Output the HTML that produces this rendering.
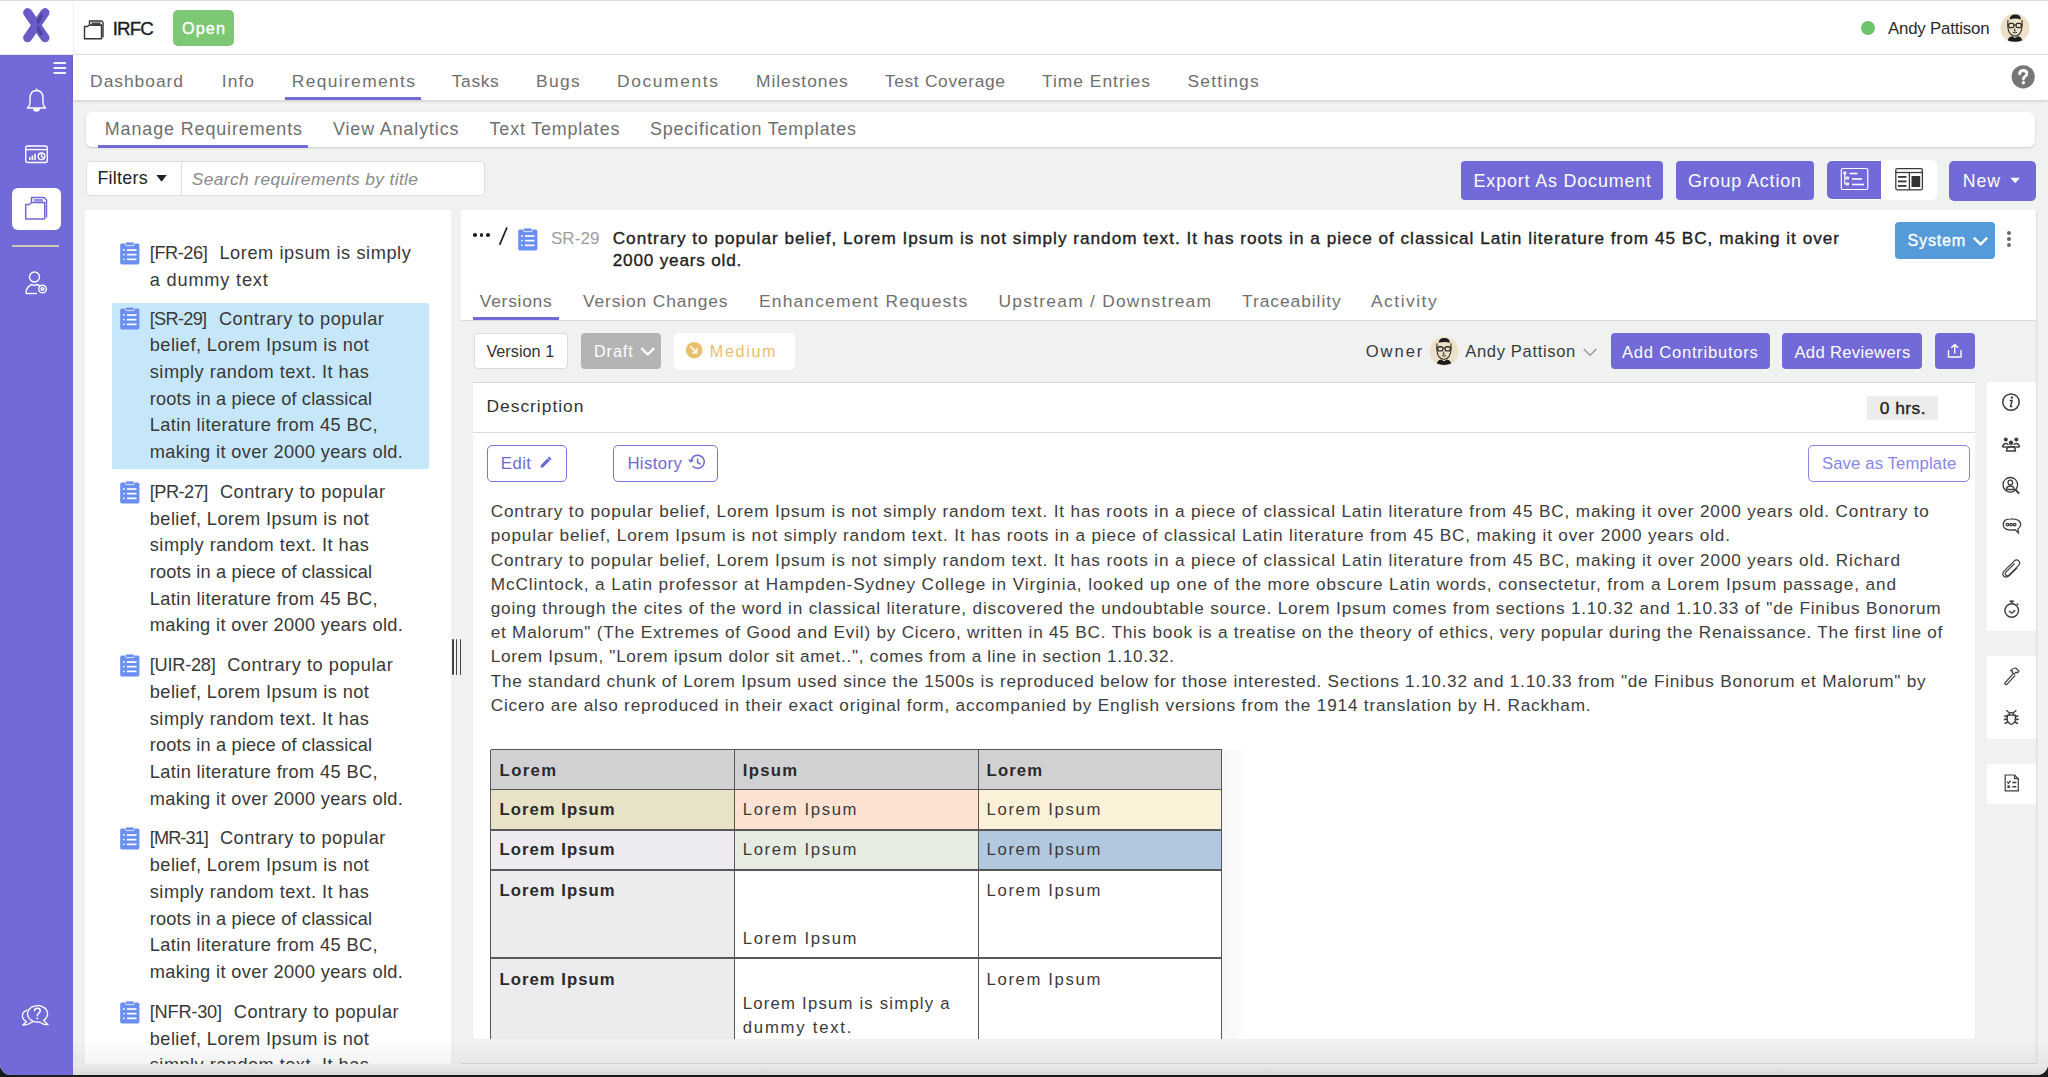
<!DOCTYPE html>
<html><head><meta charset="utf-8"><style>
html,body{margin:0;padding:0;}
body{width:2048px;height:1077px;overflow:hidden;background:#1b1b1b;font-family:"Liberation Sans",sans-serif;position:relative;}
#scr{position:absolute;left:0;top:0;width:2048px;height:1075px;background:#f0f1f1;overflow:hidden;border-radius:0 0 11px 11px;}
#scr div,#scr svg,#scr span{position:absolute;}
.t{white-space:pre;line-height:0;height:0;display:block;}
.t .b{display:inline-block;width:0;height:0;vertical-align:baseline;}
</style></head><body><div id="scr">
<div style="left:0px;top:0px;width:2048px;height:54px;background:#fff"></div>
<div style="left:0px;top:0px;width:2048px;height:1px;background:#dcdcdc"></div>
<div style="left:0px;top:54px;width:2048px;height:1px;background:#e2e2e2"></div>
<div style="left:73px;top:1px;width:1px;height:53px;background:#efefef"></div>
<div style="left:0px;top:55px;width:73px;height:1020px;background:#716ad8"></div>
<div style="left:73px;top:55px;width:1975px;height:45px;background:#fff;box-shadow:0 1px 3px rgba(0,0,0,.18)"></div>
<div style="left:285px;top:97px;width:136px;height:3px;background:#716ad8"></div>
<div style="left:86px;top:112px;width:1949px;height:35px;background:#fff;border-radius:6px;box-shadow:0 1px 2px rgba(0,0,0,.16)"></div>
<div style="left:98px;top:145px;width:210px;height:2.5px;background:#716ad8"></div>
<div style="left:86px;top:160.5px;width:399px;height:35.0px;background:#fff;border:1px solid #dedede;border-radius:4px;box-sizing:border-box"></div>
<div style="left:180.5px;top:161px;width:1.0px;height:34px;background:#dedede"></div>
<div style="left:1460.5px;top:160.5px;width:202.5px;height:39.5px;background:#716ad8;border-radius:4px"></div>
<div style="left:1675.5px;top:160.5px;width:138.5px;height:39.5px;background:#716ad8;border-radius:4px"></div>
<div style="left:1827px;top:160px;width:110px;height:40px;background:#fff;border-radius:5px"></div>
<div style="left:1827px;top:161px;width:54px;height:38px;background:#716ad8;border-radius:5px 0 0 5px"></div>
<div style="left:1949px;top:160.5px;width:87px;height:40.0px;background:#716ad8;border-radius:5px"></div>
<div style="left:85px;top:210px;width:366px;height:853.5px;background:#fff"></div>
<div style="left:112px;top:303px;width:317px;height:165.5px;background:#c6e7fa;border-radius:2px"></div>
<div style="left:461px;top:210px;width:1575px;height:853.5px;background:#f0f1f1;box-shadow:1px 1px 1px rgba(0,0,0,.08)"></div>
<div style="left:461px;top:210px;width:1575px;height:110px;background:#fff"></div>
<div style="left:461px;top:319.5px;width:1575px;height:1.0px;background:#dcdcdc"></div>
<div style="left:473px;top:317px;width:85.5px;height:3px;background:#716ad8"></div>
<div style="left:1895px;top:222.3px;width:99.5px;height:36.69999999999999px;background:#559bd9;border-radius:4px"></div>
<div style="left:473.5px;top:333.3px;width:94.79999999999995px;height:36.0px;background:#fff;border:1px solid #dcdcdc;border-radius:4px;box-sizing:border-box"></div>
<div style="left:581px;top:333.3px;width:80.29999999999995px;height:36.19999999999999px;background:#b5b4b4;border-radius:4px"></div>
<div style="left:673.8px;top:333.3px;width:121.20000000000005px;height:36.39999999999998px;background:#fff;border-radius:5px"></div>
<div style="left:1610.6px;top:333.3px;width:159.4000000000001px;height:36.099999999999966px;background:#716ad8;border-radius:4px"></div>
<div style="left:1782px;top:333.3px;width:140.20000000000005px;height:36.099999999999966px;background:#716ad8;border-radius:4px"></div>
<div style="left:1934.8px;top:333.3px;width:39.799999999999955px;height:36.099999999999966px;background:#716ad8;border-radius:4px"></div>
<div style="left:473px;top:382px;width:1502px;height:656.5999999999999px;background:#fff;border-radius:0 0 5px 5px"></div>
<div style="left:473px;top:382px;width:1502px;height:1.3000000000000114px;background:#d9d9d9"></div>
<div style="left:473px;top:432px;width:1502px;height:1.3000000000000114px;background:#d9d9d9"></div>
<div style="left:1867px;top:395.5px;width:71px;height:24.0px;background:#ececec;border-radius:2px"></div>
<div style="left:486.5px;top:445.3px;width:80.79999999999995px;height:36.30000000000001px;border:1.5px solid #7b74e0;border-radius:5px;box-sizing:border-box"></div>
<div style="left:612.8px;top:445.3px;width:104.80000000000007px;height:36.30000000000001px;border:1.5px solid #7b74e0;border-radius:5px;box-sizing:border-box"></div>
<div style="left:1808.4px;top:445.3px;width:161.29999999999995px;height:36.30000000000001px;border:1.5px solid #8a84e6;border-radius:5px;box-sizing:border-box"></div>
<div style="left:1987px;top:382px;width:48.5px;height:248.5px;background:#fff"></div>
<div style="left:1987px;top:655.5px;width:48.5px;height:83.0px;background:#fff"></div>
<div style="left:1987px;top:763.5px;width:48.5px;height:40.5px;background:#fff"></div>
<div style="left:1221.7px;top:749.7px;width:30px;height:288.9px;background:linear-gradient(90deg,rgba(0,0,0,.035),rgba(0,0,0,0))"></div>
<div style="left:490.5px;top:749.7px;width:243.70000000000005px;height:39.799999999999955px;background:#d1d1d4"></div>
<div style="left:734.2px;top:749.7px;width:244.19999999999993px;height:39.799999999999955px;background:#d1d1d4"></div>
<div style="left:978.4px;top:749.7px;width:243.30000000000007px;height:39.799999999999955px;background:#d1d1d4"></div>
<div style="left:490.5px;top:789.5px;width:243.70000000000005px;height:40.5px;background:#e8e2c6"></div>
<div style="left:734.2px;top:789.5px;width:244.19999999999993px;height:40.5px;background:#fde2d2"></div>
<div style="left:978.4px;top:789.5px;width:243.30000000000007px;height:40.5px;background:#fbf0d8"></div>
<div style="left:490.5px;top:830px;width:243.70000000000005px;height:40px;background:#edeaf2"></div>
<div style="left:734.2px;top:830px;width:244.19999999999993px;height:40px;background:#e7ece2"></div>
<div style="left:978.4px;top:830px;width:243.30000000000007px;height:40px;background:#b1c8de"></div>
<div style="left:490.5px;top:870px;width:243.70000000000005px;height:88px;background:#ececef"></div>
<div style="left:734.2px;top:870px;width:244.19999999999993px;height:88px;background:#ffffff"></div>
<div style="left:978.4px;top:870px;width:243.30000000000007px;height:88px;background:#ffffff"></div>
<div style="left:490.5px;top:958px;width:243.70000000000005px;height:80.59999999999991px;background:#ececef"></div>
<div style="left:734.2px;top:958px;width:244.19999999999993px;height:80.59999999999991px;background:#ffffff"></div>
<div style="left:978.4px;top:958px;width:243.30000000000007px;height:80.59999999999991px;background:#ffffff"></div>
<div style="left:490.5px;top:749.0px;width:731.9000000000001px;height:1.400000000000091px;background:#575757"></div>
<div style="left:490.5px;top:788.8px;width:731.9000000000001px;height:1.400000000000091px;background:#575757"></div>
<div style="left:490.5px;top:829.3px;width:731.9000000000001px;height:1.400000000000091px;background:#575757"></div>
<div style="left:490.5px;top:869.3px;width:731.9000000000001px;height:1.400000000000091px;background:#575757"></div>
<div style="left:490.5px;top:957.3px;width:731.9000000000001px;height:1.400000000000091px;background:#575757"></div>
<div style="left:489.8px;top:749.7px;width:1.3999999999999773px;height:288.89999999999986px;background:#575757"></div>
<div style="left:733.5px;top:749.7px;width:1.400000000000091px;height:288.89999999999986px;background:#575757"></div>
<div style="left:977.6999999999999px;top:749.7px;width:1.400000000000091px;height:288.89999999999986px;background:#575757"></div>
<div style="left:1221.0px;top:749.7px;width:1.400000000000091px;height:288.89999999999986px;background:#575757"></div>
<svg style="left:20px;top:5px;width:33px;height:40px" viewBox="20 5 33 40"><defs><linearGradient id="lg" x1="0" y1="0" x2="1" y2="0"><stop offset="0" stop-color="#5a4fb8"/><stop offset="1" stop-color="#7a6ee0"/></linearGradient></defs><line x1="27.6" y1="12.6" x2="45" y2="37.8" stroke="#6a5bcb" stroke-width="9" stroke-linecap="round"/><line x1="45" y1="12.6" x2="27.6" y2="37.8" stroke="#6a5bcb" stroke-width="9" stroke-linecap="round"/><path d="M36.3 20.5 L41.5 13.5 L43 16 L38.5 25 Z" fill="#3c3478" opacity=".6"/><path d="M36.3 29.5 L41.5 36.5 L43 34 L38.5 25 Z" fill="#3c3478" opacity=".6"/></svg>
<svg style="left:83px;top:19px;width:23px;height:23px" viewBox="83 19 23 23"><g fill="none" stroke="#333" stroke-width="1.4" stroke-linejoin="round"><path d="M84.5 26.5 h3 l2 -1.5 h12 v13.8 h-17 z"/><path d="M89.5 25 v-4 h12 l1.5 1.5 v15"/><line x1="91.5" y1="23.2" x2="100.5" y2="23.2"/><line x1="91.5" y1="25" x2="100.5" y2="25"/></g></svg>
<div style="left:173.1px;top:9.8px;width:61.400000000000006px;height:36.2px;background:#7dc874;border-radius:5px"></div>
<div style="left:1861px;top:21px;width:14px;height:14px;border-radius:50%;background:#6cc46b"></div>
<svg style="left:2000px;top:13px;width:30px;height:30px" viewBox="2000 13 30 30"><circle cx="2015" cy="28" r="14.5" fill="#eee0c6"/><g transform="translate(2015,28) scale(1.0)" fill="none" stroke="#2a2a2a" stroke-width="1.1" stroke-linejoin="round"><path d="M-5.5 -8.6 q.5 -4.8 5.8 -4.8 q5.5 0 5.6 4.8 q-5.5 -1.6 -11.4 0 z" fill="#1e1e1e" stroke="none"/><path d="M-7 -8 q-.8 8 1.2 12.2 q2.2 3.6 5.8 3.8 q3.6 -.2 5.6 -3.8 q2 -4 1.4 -12.2"/><rect x="-6.3" y="-4.6" width="5.2" height="4.2" rx="1.6" stroke-width="1.3"/><rect x="1.1" y="-4.6" width="5.2" height="4.2" rx="1.6" stroke-width="1.3"/><path d="M-1.1 -3 h2.2 M-7.5 -3.4 h1.2 M6.3 -3.4 h1.2"/><path d="M0 .3 l-.9 2.6 h1.8 M-2.2 4.4 q2.2 1 4.4 0" stroke-width=".9"/><path d="M-7.2 12.4 q.6 -3.6 4.4 -4.2 l2.8 1.8 l2.8 -1.8 q3.8 .6 4.4 4.2 q-7.2 2.6 -14.4 0 z" fill="#1b1b1b" stroke="none"/></g></svg>
<svg style="left:2011px;top:65px;width:24px;height:24px" viewBox="2011 65 24 24"><circle cx="2023.2" cy="76.8" r="11.6" fill="#767676"/><path d="M2019.6 73.8 q.3 -3.3 3.7 -3.3 q3.6 0 3.6 3.1 q0 2 -2.2 3.1 q-1.3 .7 -1.3 2.4" fill="none" stroke="#fff" stroke-width="2.8" stroke-linecap="round"/><circle cx="2023.4" cy="82.8" r="1.7" fill="#fff"/></svg>
<svg style="left:52px;top:60px;width:16px;height:16px" viewBox="52 60 16 16"><g stroke="#fff" stroke-width="1.8"><line x1="53.5" y1="63" x2="66" y2="63"/><line x1="53.5" y1="68" x2="66" y2="68"/><line x1="53.5" y1="73" x2="66" y2="73"/></g></svg>
<svg style="left:24px;top:86px;width:25px;height:28px" viewBox="24 86 25 28"><g fill="none" stroke="#fff" stroke-width="1.4" stroke-linejoin="round"><path d="M36.5 90.5 q-6.5 0 -6.5 8 v4.5 q0 3 -2.6 5 h18.2 q-2.6 -2 -2.6 -5 v-4.5 q0 -8 -6.5 -8 z"/><path d="M33.8 108.5 q0 2.6 2.7 2.6 q2.7 0 2.7 -2.6" fill="#fff"/><line x1="36.5" y1="88.5" x2="36.5" y2="90.5"/></g></svg>
<svg style="left:23px;top:143px;width:27px;height:22px" viewBox="23 143 27 22"><g fill="none" stroke="#fff" stroke-width="1.4"><rect x="25.7" y="146" width="21.6" height="16.5" rx="2"/><line x1="25.7" y1="149.6" x2="47.3" y2="149.6"/><circle cx="41.5" cy="156.3" r="3.3"/><path d="M41.5 153 v3.3 l2.3 2.3"/></g><g fill="#fff"><rect x="29" y="157" width="1.6" height="3"/><rect x="31.6" y="155.5" width="1.6" height="4.5"/><rect x="34.2" y="153.8" width="1.6" height="6.2"/></g></svg>
<div style="left:12px;top:188px;width:49px;height:41.599999999999994px;background:#fff;border-radius:6px"></div>
<svg style="left:23px;top:195px;width:27px;height:27px" viewBox="23 195 27 27"><g fill="none" stroke="#716ad8" stroke-width="1.5" stroke-linejoin="round"><path d="M25.7 204.5 h3.5 l2.5 -2 h13 v16.5 h-19 z"/><path d="M31.5 202.5 v-5 h12.5 l2.5 2.5 v17.5"/><line x1="34" y1="200" x2="43" y2="200"/><line x1="34" y1="202.3" x2="43" y2="202.3"/></g></svg>
<div style="left:12px;top:245px;width:46.5px;height:2px;background:#cdc8b0"></div>
<svg style="left:23px;top:269px;width:27px;height:28px" viewBox="23 269 27 28"><g fill="none" stroke="#fff" stroke-width="1.4"><circle cx="34.5" cy="277" r="5"/><path d="M26 293.5 q0 -7 6 -9 q2.5 1.5 5 0 q2.5 1 3.5 2"/><path d="M26 293.5 h11"/><circle cx="42.5" cy="289" r="3.8"/><circle cx="42.5" cy="289" r="1.3"/></g></svg>
<svg style="left:18px;top:1000px;width:34px;height:30px" viewBox="18 1000 34 30"><g fill="none" stroke="#fff" stroke-width="1.3" stroke-linejoin="round" stroke-linecap="round"><path d="M39.5 1021.9 A10 8.2 0 1 1 43.6 1020.4 L48 1024.7 Q43 1024.6 39.5 1021.9 Z"/><path d="M26.9 1010.2 Q22.4 1012 22.4 1016 Q22.4 1019.5 26.5 1021.7 L22.8 1025.1 Q28 1025 32.8 1021.7"/><path d="M34.6 1010.6 q0 -2.3 2.8 -2.3 q2.8 0 2.8 2.4 q0 1.5 -1.6 2.6 q-1.3 1 -1.3 2.4" stroke-width="1.6"/></g><circle cx="37.3" cy="1018.4" r="1" fill="#fff"/></svg>
<svg style="left:155px;top:174px;width:13px;height:9px" viewBox="155 174 13 9"><path d="M156.3 175 h10.5 l-5.25 6.8 z" fill="#222"/></svg>
<svg style="left:1839px;top:166px;width:31px;height:25px" viewBox="1839 166 31 25"><g fill="none" stroke="#fff" stroke-width="1.2"><rect x="1841.3" y="168.5" width="26.5" height="21" rx="1.5"/><circle cx="1844.8" cy="173" r="1.1"/><circle cx="1847.5" cy="178" r="1.1"/><circle cx="1847.5" cy="184" r="1.1"/><path d="M1844.8 174 v10 h1.6 M1844.8 178 h1.6"/><line x1="1849.5" y1="173.5" x2="1857.5" y2="173.5" stroke-width="1.6"/><line x1="1852" y1="179" x2="1862" y2="179" stroke-width="1.6"/><line x1="1852" y1="184.5" x2="1864" y2="184.5" stroke-width="1.6"/></g></svg>
<svg style="left:1893px;top:166px;width:32px;height:26px" viewBox="1893 166 32 26"><g fill="none" stroke="#3a3a3a" stroke-width="1.3"><rect x="1895.8" y="168.6" width="26.6" height="21.2" rx="1.5"/><line x1="1895.8" y1="172.5" x2="1922.4" y2="172.5"/><line x1="1909.4" y1="172.5" x2="1909.4" y2="189.8"/></g><g fill="#333"><rect x="1898" y="176" width="8.5" height="1.8"/><rect x="1898" y="180.5" width="8.5" height="1.8"/><rect x="1898" y="185" width="8.5" height="1.8"/><rect x="1911.5" y="176" width="8.7" height="11"/></g></svg>
<svg style="left:2009px;top:176px;width:12px;height:9px" viewBox="2009 176 12 9"><path d="M2010.4 177.8 h9.5 l-4.75 5.4 z" fill="#fff"/></svg>
<svg style="left:119.5px;top:242.0px;width:20px;height:23px" viewBox="0 0 20 23"><rect x="0.2" y="1.6" width="19.2" height="20.8" rx="1.6" fill="#6a8ff0"/><rect x="5.5" y="0" width="8.7" height="3.6" rx="1.3" fill="#6a8ff0" stroke="#fff" stroke-width=".8"/><g fill="#fff"><circle cx="3.9" cy="8" r=".9"/><circle cx="3.9" cy="12.6" r=".9"/><circle cx="3.9" cy="17.3" r=".9"/><rect x="6.9" y="7.2" width="9.6" height="1.7"/><rect x="6.9" y="11.8" width="9.6" height="1.7"/><rect x="6.9" y="16.5" width="9.6" height="1.7"/></g></svg>
<svg style="left:119.5px;top:307.3px;width:20px;height:23px" viewBox="0 0 20 23"><rect x="0.2" y="1.6" width="19.2" height="20.8" rx="1.6" fill="#6a8ff0"/><rect x="5.5" y="0" width="8.7" height="3.6" rx="1.3" fill="#6a8ff0" stroke="#fff" stroke-width=".8"/><g fill="#fff"><circle cx="3.9" cy="8" r=".9"/><circle cx="3.9" cy="12.6" r=".9"/><circle cx="3.9" cy="17.3" r=".9"/><rect x="6.9" y="7.2" width="9.6" height="1.7"/><rect x="6.9" y="11.8" width="9.6" height="1.7"/><rect x="6.9" y="16.5" width="9.6" height="1.7"/></g></svg>
<svg style="left:119.5px;top:480.6px;width:20px;height:23px" viewBox="0 0 20 23"><rect x="0.2" y="1.6" width="19.2" height="20.8" rx="1.6" fill="#6a8ff0"/><rect x="5.5" y="0" width="8.7" height="3.6" rx="1.3" fill="#6a8ff0" stroke="#fff" stroke-width=".8"/><g fill="#fff"><circle cx="3.9" cy="8" r=".9"/><circle cx="3.9" cy="12.6" r=".9"/><circle cx="3.9" cy="17.3" r=".9"/><rect x="6.9" y="7.2" width="9.6" height="1.7"/><rect x="6.9" y="11.8" width="9.6" height="1.7"/><rect x="6.9" y="16.5" width="9.6" height="1.7"/></g></svg>
<svg style="left:119.5px;top:653.9px;width:20px;height:23px" viewBox="0 0 20 23"><rect x="0.2" y="1.6" width="19.2" height="20.8" rx="1.6" fill="#6a8ff0"/><rect x="5.5" y="0" width="8.7" height="3.6" rx="1.3" fill="#6a8ff0" stroke="#fff" stroke-width=".8"/><g fill="#fff"><circle cx="3.9" cy="8" r=".9"/><circle cx="3.9" cy="12.6" r=".9"/><circle cx="3.9" cy="17.3" r=".9"/><rect x="6.9" y="7.2" width="9.6" height="1.7"/><rect x="6.9" y="11.8" width="9.6" height="1.7"/><rect x="6.9" y="16.5" width="9.6" height="1.7"/></g></svg>
<svg style="left:119.5px;top:827.1999999999999px;width:20px;height:23px" viewBox="0 0 20 23"><rect x="0.2" y="1.6" width="19.2" height="20.8" rx="1.6" fill="#6a8ff0"/><rect x="5.5" y="0" width="8.7" height="3.6" rx="1.3" fill="#6a8ff0" stroke="#fff" stroke-width=".8"/><g fill="#fff"><circle cx="3.9" cy="8" r=".9"/><circle cx="3.9" cy="12.6" r=".9"/><circle cx="3.9" cy="17.3" r=".9"/><rect x="6.9" y="7.2" width="9.6" height="1.7"/><rect x="6.9" y="11.8" width="9.6" height="1.7"/><rect x="6.9" y="16.5" width="9.6" height="1.7"/></g></svg>
<svg style="left:119.5px;top:1000.5999999999999px;width:20px;height:23px" viewBox="0 0 20 23"><rect x="0.2" y="1.6" width="19.2" height="20.8" rx="1.6" fill="#6a8ff0"/><rect x="5.5" y="0" width="8.7" height="3.6" rx="1.3" fill="#6a8ff0" stroke="#fff" stroke-width=".8"/><g fill="#fff"><circle cx="3.9" cy="8" r=".9"/><circle cx="3.9" cy="12.6" r=".9"/><circle cx="3.9" cy="17.3" r=".9"/><rect x="6.9" y="7.2" width="9.6" height="1.7"/><rect x="6.9" y="11.8" width="9.6" height="1.7"/><rect x="6.9" y="16.5" width="9.6" height="1.7"/></g></svg>
<div style="left:452.3px;top:638.5px;width:1.6px;height:36px;background:#444;border-radius:1px"></div>
<div style="left:455.9px;top:638.5px;width:1.6px;height:36px;background:#444;border-radius:1px"></div>
<div style="left:459.5px;top:638.5px;width:1.6px;height:36px;background:#444;border-radius:1px"></div>
<div style="left:473.09999999999997px;top:233px;width:3.6px;height:3.6px;border-radius:50%;background:#222"></div>
<div style="left:479.7px;top:233px;width:3.6px;height:3.6px;border-radius:50%;background:#222"></div>
<div style="left:486.4px;top:233px;width:3.6px;height:3.6px;border-radius:50%;background:#222"></div>
<svg style="left:497px;top:225px;width:12px;height:22px" viewBox="497 225 12 22"><line x1="507" y1="227.3" x2="499.6" y2="244.8" stroke="#222" stroke-width="1.7"/></svg>
<svg style="left:517.7px;top:227.6px;width:20px;height:23px" viewBox="0 0 20 23"><rect x="0.2" y="1.6" width="19.2" height="20.8" rx="1.6" fill="#6a8ff0"/><rect x="5.5" y="0" width="8.7" height="3.6" rx="1.3" fill="#6a8ff0" stroke="#fff" stroke-width=".8"/><g fill="#fff"><circle cx="3.9" cy="8" r=".9"/><circle cx="3.9" cy="12.6" r=".9"/><circle cx="3.9" cy="17.3" r=".9"/><rect x="6.9" y="7.2" width="9.6" height="1.7"/><rect x="6.9" y="11.8" width="9.6" height="1.7"/><rect x="6.9" y="16.5" width="9.6" height="1.7"/></g></svg>
<svg style="left:1972px;top:235px;width:17px;height:13px" viewBox="1972 235 17 13"><path d="M1974.5 238.3 l6 6 l6 -6" fill="none" stroke="#fff" stroke-width="2.4" stroke-linecap="round" stroke-linejoin="round"/></svg>
<div style="left:2007px;top:230.70000000000002px;width:4.2px;height:4.2px;border-radius:50%;background:#6a6a6a"></div>
<div style="left:2007px;top:236.9px;width:4.2px;height:4.2px;border-radius:50%;background:#6a6a6a"></div>
<div style="left:2007px;top:243.20000000000002px;width:4.2px;height:4.2px;border-radius:50%;background:#6a6a6a"></div>
<svg style="left:639px;top:346px;width:17px;height:12px" viewBox="639 346 17 12"><path d="M642 348.8 l5.7 5.7 l5.7 -5.7" fill="none" stroke="#fff" stroke-width="2.4" stroke-linecap="round" stroke-linejoin="round"/></svg>
<svg style="left:684px;top:340px;width:21px;height:21px" viewBox="684 340 21 21"><circle cx="694.2" cy="350.2" r="8.3" fill="#e8c06f"/><path d="M690.8 346.8 l5.2 5.2 M696.6 349 v3.6 h-3.6" fill="none" stroke="#fff" stroke-width="1.6" stroke-linecap="round"/></svg>
<svg style="left:1429px;top:336px;width:31px;height:31px" viewBox="1429 336 31 31"><circle cx="1444" cy="351.3" r="14.4" fill="#eee0c6"/><g transform="translate(1444,351.3) scale(0.993103448275862)" fill="none" stroke="#2a2a2a" stroke-width="1.1" stroke-linejoin="round"><path d="M-5.5 -8.6 q.5 -4.8 5.8 -4.8 q5.5 0 5.6 4.8 q-5.5 -1.6 -11.4 0 z" fill="#1e1e1e" stroke="none"/><path d="M-7 -8 q-.8 8 1.2 12.2 q2.2 3.6 5.8 3.8 q3.6 -.2 5.6 -3.8 q2 -4 1.4 -12.2"/><rect x="-6.3" y="-4.6" width="5.2" height="4.2" rx="1.6" stroke-width="1.3"/><rect x="1.1" y="-4.6" width="5.2" height="4.2" rx="1.6" stroke-width="1.3"/><path d="M-1.1 -3 h2.2 M-7.5 -3.4 h1.2 M6.3 -3.4 h1.2"/><path d="M0 .3 l-.9 2.6 h1.8 M-2.2 4.4 q2.2 1 4.4 0" stroke-width=".9"/><path d="M-7.2 12.4 q.6 -3.6 4.4 -4.2 l2.8 1.8 l2.8 -1.8 q3.8 .6 4.4 4.2 q-7.2 2.6 -14.4 0 z" fill="#1b1b1b" stroke="none"/></g></svg>
<svg style="left:1581px;top:346px;width:18px;height:12px" viewBox="1581 346 18 12"><path d="M1583.8 349 l6.3 6.3 l6.3 -6.3" fill="none" stroke="#9a9a9a" stroke-width="1.5"/></svg>
<svg style="left:1945px;top:341px;width:20px;height:19px" viewBox="1945 341 20 19"><g fill="none" stroke="#fff" stroke-width="1.4" stroke-linecap="round" stroke-linejoin="round"><path d="M1948.5 350.5 v6.5 h12.5 v-6.5"/><path d="M1954.7 353 v-8.5 M1951.6 347.5 l3.1 -3 l3.1 3"/></g></svg>
<svg style="left:539px;top:454px;width:15px;height:17px" viewBox="539 454 15 17"><path d="M549.2 456.6 l2.3 2.3 l-8.3 8.3 l-2.8 .6 l.6 -2.8 z" fill="#6e67d9"/><line x1="547.6" y1="458.3" x2="549.9" y2="460.6" stroke="#fff" stroke-width=".8"/></svg>
<svg style="left:687px;top:454px;width:20px;height:18px" viewBox="687 454 20 18"><g fill="none" stroke="#6e67d9" stroke-width="1.5" stroke-linecap="round"><path d="M691 461.5 a6.6 6.6 0 1 1 2 5"/><path d="M697.6 459 v3.6 l2.6 1.4"/><path d="M689.2 460 l1.8 1.8 l1.8 -1.8"/></g></svg>
<svg style="left:2001px;top:392px;width:21px;height:21px" viewBox="2001 392 21 21"><circle cx="2011" cy="402.1" r="8.2" fill="none" stroke="#3c3c3c" stroke-width="1.5"/><circle cx="2011.9" cy="397.6" r="1.2" fill="#3c3c3c"/><path d="M2009.6 400.4 h2.6 l-1.6 5.6 q-.2 .8 .6 .6 l1 -.5" fill="none" stroke="#3c3c3c" stroke-width="1.5" stroke-linejoin="round"/></svg>
<svg style="left:2001px;top:436px;width:21px;height:17px" viewBox="2001 436 21 17"><g fill="#3c3c3c"><circle cx="2005.8" cy="439.6" r="2"/><circle cx="2016.3" cy="439.6" r="2"/><circle cx="2011" cy="442.8" r="2.2"/></g><g fill="none" stroke="#3c3c3c" stroke-width="1.4"><path d="M2002.5 447 q.8 -3.5 3.3 -3.5 q1.8 0 2.6 1.5"/><path d="M2019.6 447 q-.8 -3.5 -3.3 -3.5 q-1.8 0 -2.6 1.5"/><path d="M2006.5 451 q0 -4.5 4.5 -4.5 q4.5 0 4.5 4.5 z"/><line x1="2002.5" y1="447" x2="2019.6" y2="447"/></g></svg>
<svg style="left:2001px;top:476px;width:21px;height:19px" viewBox="2001 476 21 19"><g fill="none" stroke="#3c3c3c" stroke-width="1.3"><circle cx="2010.3" cy="484.8" r="7.3"/><circle cx="2010.3" cy="482.5" r="2.3"/><path d="M2006.3 489.5 q.5 -3.5 4 -3.5 q3.5 0 4 3.5 z"/><line x1="2015.6" y1="490" x2="2019.2" y2="493.5" stroke-width="1.8"/></g></svg>
<svg style="left:2001px;top:516px;width:21px;height:20px" viewBox="2001 516 21 20"><g fill="none" stroke="#3c3c3c" stroke-width="1.3"><path d="M2011 518.8 q-7.8 0 -7.8 5.8 q0 5.2 7.5 5.6 q3.5 0 4.5 -.5 l3.3 3.3 l-.6 -4 q2.8 -1.7 2.8 -4.4 q0 -5.8 -9.7 -5.8 z"/><circle cx="2007.4" cy="524.6" r="1.3"/><circle cx="2011" cy="524.6" r="1.3"/><circle cx="2014.6" cy="524.6" r="1.3"/></g></svg>
<svg style="left:2001px;top:559px;width:21px;height:19px" viewBox="2001 559 21 19"><path d="M2014.5 563.5 l-8.3 8.3 q-1.8 1.8 -.3 3.3 q1.5 1.5 3.3 -.3 l9 -9 q2.7 -2.7 .5 -4.9 q-2.2 -2.2 -4.9 .5 l-9 9 q-3.5 3.5 -.9 5.9 q2.5 2.3 6 -1.2 l7.5 -7.5" fill="none" stroke="#3c3c3c" stroke-width="1.2"/></svg>
<svg style="left:2002px;top:599px;width:20px;height:21px" viewBox="2002 599 20 21"><g fill="none" stroke="#3c3c3c" stroke-width="1.4"><circle cx="2011.7" cy="610.5" r="6.8"/><path d="M2009 611 l2.7 2.2 l3.5 -2.8"/><line x1="2011.7" y1="601.8" x2="2011.7" y2="603.7"/><line x1="2009.6" y1="601.3" x2="2013.8" y2="601.3" stroke-width="1.8"/><line x1="2016.8" y1="603.5" x2="2018.2" y2="604.9"/></g></svg>
<svg style="left:2002px;top:665px;width:20px;height:21px" viewBox="2002 665 20 21"><g fill="none" stroke="#3c3c3c" stroke-width="1.2" stroke-linejoin="round"><path d="M2013.3 673.6 L2005.2 682.6 q-.9 1.3 .3 1.9 q1 .5 1.8 -.6 L2015.2 675.3"/><path d="M2010.6 670.6 q2.2 -2.6 5.2 -2.6 l3.2 3.2 l-1.6 1.7 l-1.4 -.8 l-1.8 2 l-2.2 -1.9 l.6 -.8 q-1.2 -1.3 -2 -.8 z"/></g></svg>
<svg style="left:2002px;top:707px;width:20px;height:20px" viewBox="2002 707 20 20"><g fill="none" stroke="#3c3c3c" stroke-width="1.3" stroke-linecap="round"><path d="M2007.2 715.2 h8.2 v3.4 q0 4.6 -4.1 5.9 q-4.1 -1.3 -4.1 -5.9 z"/><path d="M2009 715.2 q0 -2.6 2.3 -2.6 q2.3 0 2.3 2.6"/><path d="M2009.2 712.8 l-2.6 -2.2 M2013.4 712.8 l2.6 -2.2"/><path d="M2007.2 716.8 l-2.4 -.8 M2007.2 719.4 h-2.6 M2007.6 722 l-2.4 1.4 M2015.4 716.8 l2.4 -.8 M2015.4 719.4 h2.6 M2015 722 l2.4 1.4" stroke-width="1.6"/></g></svg>
<svg style="left:2002px;top:772px;width:20px;height:21px" viewBox="2002 772 20 21"><g fill="none" stroke="#3c3c3c" stroke-width="1.2"><path d="M2005.2 775 h9.4 l3.7 3.7 v12.2 h-13.1 z"/><path d="M2014.6 775 v3.7 h3.7"/><path d="M2007.2 781.8 l1.3 1.4 l2.2 -2.6" stroke-width="1.3"/><path d="M2007.5 785.5 l2.4 2.4 M2009.9 785.5 l-2.4 2.4" stroke-width="1.2"/><line x1="2012.3" y1="782.5" x2="2016.3" y2="782.5" stroke-width="1.6"/><line x1="2012.3" y1="786.7" x2="2016.3" y2="786.7" stroke-width="1.6"/></g></svg>
<span class="t" id="t0" style="left:112.80px;top:28.50px;font-size:18.8px;color:#1c1c1c;font-weight:500;letter-spacing:-0.909px;-webkit-text-stroke:0.35px currentColor;"><i class="b"></i>IRFC</span>
<span class="t" id="t1" style="left:181.90px;top:27.61px;font-size:16.3px;color:#ffffff;font-weight:500;letter-spacing:1.085px;-webkit-text-stroke:0.35px currentColor;"><i class="b"></i>Open</span>
<span class="t" id="t2" style="left:1888.00px;top:28.61px;font-size:16.8px;color:#2a2a2a;font-weight:400;letter-spacing:-0.164px;"><i class="b"></i>Andy Pattison</span>
<span class="t" id="t3" style="left:90.10px;top:81.00px;font-size:17.4px;color:#6f6f6f;font-weight:400;letter-spacing:0.978px;"><i class="b"></i>Dashboard</span>
<span class="t" id="t4" style="left:221.80px;top:81.00px;font-size:17.4px;color:#6f6f6f;font-weight:400;letter-spacing:1.061px;"><i class="b"></i>Info</span>
<span class="t" id="t5" style="left:291.80px;top:81.00px;font-size:17.4px;color:#6f6f6f;font-weight:400;letter-spacing:1.349px;"><i class="b"></i>Requirements</span>
<span class="t" id="t6" style="left:451.80px;top:81.00px;font-size:17.4px;color:#6f6f6f;font-weight:400;letter-spacing:0.612px;"><i class="b"></i>Tasks</span>
<span class="t" id="t7" style="left:535.90px;top:81.00px;font-size:17.4px;color:#6f6f6f;font-weight:400;letter-spacing:1.420px;"><i class="b"></i>Bugs</span>
<span class="t" id="t8" style="left:617.00px;top:81.00px;font-size:17.4px;color:#6f6f6f;font-weight:400;letter-spacing:1.629px;"><i class="b"></i>Documents</span>
<span class="t" id="t9" style="left:756.00px;top:81.00px;font-size:17.4px;color:#6f6f6f;font-weight:400;letter-spacing:0.953px;"><i class="b"></i>Milestones</span>
<span class="t" id="t10" style="left:884.80px;top:81.00px;font-size:17.4px;color:#6f6f6f;font-weight:400;letter-spacing:0.672px;"><i class="b"></i>Test Coverage</span>
<span class="t" id="t11" style="left:1042.00px;top:81.00px;font-size:17.4px;color:#6f6f6f;font-weight:400;letter-spacing:1.003px;"><i class="b"></i>Time Entries</span>
<span class="t" id="t12" style="left:1187.50px;top:81.00px;font-size:17.4px;color:#6f6f6f;font-weight:400;letter-spacing:1.179px;"><i class="b"></i>Settings</span>
<span class="t" id="t13" style="left:104.80px;top:128.71px;font-size:17.9px;color:#6f6f6f;font-weight:400;letter-spacing:0.900px;"><i class="b"></i>Manage Requirements</span>
<span class="t" id="t14" style="left:333.00px;top:128.71px;font-size:17.9px;color:#6f6f6f;font-weight:400;letter-spacing:0.882px;"><i class="b"></i>View Analytics</span>
<span class="t" id="t15" style="left:489.60px;top:128.71px;font-size:17.9px;color:#6f6f6f;font-weight:400;letter-spacing:0.831px;"><i class="b"></i>Text Templates</span>
<span class="t" id="t16" style="left:650.00px;top:128.71px;font-size:17.9px;color:#6f6f6f;font-weight:400;letter-spacing:0.835px;"><i class="b"></i>Specification Templates</span>
<span class="t" id="t17" style="left:97.40px;top:177.80px;font-size:17.9px;color:#222;font-weight:400;letter-spacing:0.266px;"><i class="b"></i>Filters</span>
<span class="t" id="t18" style="left:191.80px;top:178.50px;font-size:17.4px;color:#8a8a8a;font-weight:400;letter-spacing:0.358px;font-style:italic;"><i class="b"></i>Search requirements by title</span>
<span class="t" id="t19" style="left:1473.60px;top:181.21px;font-size:17.9px;color:#fff;font-weight:400;letter-spacing:0.842px;"><i class="b"></i>Export As Document</span>
<span class="t" id="t20" style="left:1688.00px;top:181.21px;font-size:17.9px;color:#fff;font-weight:400;letter-spacing:0.869px;"><i class="b"></i>Group Action</span>
<span class="t" id="t21" style="left:1962.80px;top:180.71px;font-size:17.7px;color:#fff;font-weight:400;letter-spacing:0.955px;"><i class="b"></i>New</span>
<span class="t" id="t22" style="left:149.80px;top:253.21px;font-size:18.2px;color:#383838;font-weight:400;letter-spacing:-0.457px;"><i class="b"></i>[FR-26]</span>
<span class="t" id="t23" style="left:219.40px;top:253.21px;font-size:18.2px;color:#383838;font-weight:400;letter-spacing:0.575px;"><i class="b"></i>Lorem ipsum is simply</span>
<span class="t" id="t24" style="left:149.80px;top:279.91px;font-size:18.2px;color:#383838;font-weight:400;letter-spacing:0.803px;"><i class="b"></i>a dummy text</span>
<span class="t" id="t25" style="left:149.80px;top:318.50px;font-size:18.2px;color:#383838;font-weight:400;letter-spacing:-0.729px;"><i class="b"></i>[SR-29]</span>
<span class="t" id="t26" style="left:218.90px;top:318.50px;font-size:18.2px;color:#383838;font-weight:400;letter-spacing:0.517px;"><i class="b"></i>Contrary to popular</span>
<span class="t" id="t27" style="left:149.80px;top:345.21px;font-size:18.2px;color:#383838;font-weight:400;letter-spacing:0.434px;"><i class="b"></i>belief, Lorem Ipsum is not</span>
<span class="t" id="t28" style="left:149.80px;top:371.91px;font-size:18.2px;color:#383838;font-weight:400;letter-spacing:0.475px;"><i class="b"></i>simply random text. It has</span>
<span class="t" id="t29" style="left:149.80px;top:398.61px;font-size:18.2px;color:#383838;font-weight:400;letter-spacing:0.173px;"><i class="b"></i>roots in a piece of classical</span>
<span class="t" id="t30" style="left:149.80px;top:425.30px;font-size:18.2px;color:#383838;font-weight:400;letter-spacing:0.387px;"><i class="b"></i>Latin literature from 45 BC,</span>
<span class="t" id="t31" style="left:149.80px;top:452.00px;font-size:18.2px;color:#383838;font-weight:400;letter-spacing:0.361px;"><i class="b"></i>making it over 2000 years old.</span>
<span class="t" id="t32" style="left:149.80px;top:491.80px;font-size:18.2px;color:#383838;font-weight:400;letter-spacing:-0.512px;"><i class="b"></i>[PR-27]</span>
<span class="t" id="t33" style="left:219.90px;top:491.80px;font-size:18.2px;color:#383838;font-weight:400;letter-spacing:0.523px;"><i class="b"></i>Contrary to popular</span>
<span class="t" id="t34" style="left:149.80px;top:518.50px;font-size:18.2px;color:#383838;font-weight:400;letter-spacing:0.434px;"><i class="b"></i>belief, Lorem Ipsum is not</span>
<span class="t" id="t35" style="left:149.80px;top:545.21px;font-size:18.2px;color:#383838;font-weight:400;letter-spacing:0.475px;"><i class="b"></i>simply random text. It has</span>
<span class="t" id="t36" style="left:149.80px;top:571.91px;font-size:18.2px;color:#383838;font-weight:400;letter-spacing:0.173px;"><i class="b"></i>roots in a piece of classical</span>
<span class="t" id="t37" style="left:149.80px;top:598.61px;font-size:18.2px;color:#383838;font-weight:400;letter-spacing:0.387px;"><i class="b"></i>Latin literature from 45 BC,</span>
<span class="t" id="t38" style="left:149.80px;top:625.30px;font-size:18.2px;color:#383838;font-weight:400;letter-spacing:0.361px;"><i class="b"></i>making it over 2000 years old.</span>
<span class="t" id="t39" style="left:149.80px;top:665.11px;font-size:18.2px;color:#383838;font-weight:400;letter-spacing:-0.246px;"><i class="b"></i>[UIR-28]</span>
<span class="t" id="t40" style="left:227.20px;top:665.11px;font-size:18.2px;color:#383838;font-weight:400;letter-spacing:0.545px;"><i class="b"></i>Contrary to popular</span>
<span class="t" id="t41" style="left:149.80px;top:691.80px;font-size:18.2px;color:#383838;font-weight:400;letter-spacing:0.434px;"><i class="b"></i>belief, Lorem Ipsum is not</span>
<span class="t" id="t42" style="left:149.80px;top:718.50px;font-size:18.2px;color:#383838;font-weight:400;letter-spacing:0.475px;"><i class="b"></i>simply random text. It has</span>
<span class="t" id="t43" style="left:149.80px;top:745.21px;font-size:18.2px;color:#383838;font-weight:400;letter-spacing:0.173px;"><i class="b"></i>roots in a piece of classical</span>
<span class="t" id="t44" style="left:149.80px;top:771.91px;font-size:18.2px;color:#383838;font-weight:400;letter-spacing:0.387px;"><i class="b"></i>Latin literature from 45 BC,</span>
<span class="t" id="t45" style="left:149.80px;top:798.61px;font-size:18.2px;color:#383838;font-weight:400;letter-spacing:0.361px;"><i class="b"></i>making it over 2000 years old.</span>
<span class="t" id="t46" style="left:149.80px;top:838.41px;font-size:18.2px;color:#383838;font-weight:400;letter-spacing:-0.931px;"><i class="b"></i>[MR-31]</span>
<span class="t" id="t47" style="left:219.90px;top:838.41px;font-size:18.2px;color:#383838;font-weight:400;letter-spacing:0.545px;"><i class="b"></i>Contrary to popular</span>
<span class="t" id="t48" style="left:149.80px;top:865.11px;font-size:18.2px;color:#383838;font-weight:400;letter-spacing:0.434px;"><i class="b"></i>belief, Lorem Ipsum is not</span>
<span class="t" id="t49" style="left:149.80px;top:891.80px;font-size:18.2px;color:#383838;font-weight:400;letter-spacing:0.475px;"><i class="b"></i>simply random text. It has</span>
<span class="t" id="t50" style="left:149.80px;top:918.50px;font-size:18.2px;color:#383838;font-weight:400;letter-spacing:0.173px;"><i class="b"></i>roots in a piece of classical</span>
<span class="t" id="t51" style="left:149.80px;top:945.21px;font-size:18.2px;color:#383838;font-weight:400;letter-spacing:0.387px;"><i class="b"></i>Latin literature from 45 BC,</span>
<span class="t" id="t52" style="left:149.80px;top:971.91px;font-size:18.2px;color:#383838;font-weight:400;letter-spacing:0.361px;"><i class="b"></i>making it over 2000 years old.</span>
<span class="t" id="t53" style="left:149.80px;top:1011.80px;font-size:18.2px;color:#383838;font-weight:400;letter-spacing:-0.226px;"><i class="b"></i>[NFR-30]</span>
<span class="t" id="t54" style="left:233.80px;top:1011.80px;font-size:18.2px;color:#383838;font-weight:400;letter-spacing:0.506px;"><i class="b"></i>Contrary to popular</span>
<span class="t" id="t55" style="left:149.80px;top:1038.50px;font-size:18.2px;color:#383838;font-weight:400;letter-spacing:0.434px;"><i class="b"></i>belief, Lorem Ipsum is not</span>
<span class="t" id="t56" style="left:149.80px;top:1065.21px;font-size:18.2px;color:#383838;font-weight:400;letter-spacing:0.475px;"><i class="b"></i>simply random text. It has</span>
<span class="t" id="t57" style="left:550.90px;top:239.21px;font-size:17px;color:#9d9d9d;font-weight:400;letter-spacing:0.078px;"><i class="b"></i>SR-29</span>
<span class="t" id="t58" style="left:612.70px;top:238.21px;font-size:17.2px;color:#222;font-weight:500;letter-spacing:0.993px;-webkit-text-stroke:0.35px currentColor;"><i class="b"></i>Contrary to popular belief, Lorem Ipsum is not simply random text. It has roots in a piece of classical Latin literature from 45 BC, making it over</span>
<span class="t" id="t59" style="left:612.70px;top:260.41px;font-size:17.2px;color:#222;font-weight:500;letter-spacing:0.791px;-webkit-text-stroke:0.35px currentColor;"><i class="b"></i>2000 years old.</span>
<span class="t" id="t60" style="left:479.80px;top:300.71px;font-size:17.4px;color:#707070;font-weight:400;letter-spacing:0.742px;"><i class="b"></i>Versions</span>
<span class="t" id="t61" style="left:583.00px;top:300.71px;font-size:17.4px;color:#707070;font-weight:400;letter-spacing:0.860px;"><i class="b"></i>Version Changes</span>
<span class="t" id="t62" style="left:759.00px;top:300.71px;font-size:17.4px;color:#707070;font-weight:400;letter-spacing:1.188px;"><i class="b"></i>Enhancement Requests</span>
<span class="t" id="t63" style="left:998.50px;top:300.71px;font-size:17.4px;color:#707070;font-weight:400;letter-spacing:1.251px;"><i class="b"></i>Upstream / Downstream</span>
<span class="t" id="t64" style="left:1242.00px;top:300.71px;font-size:17.4px;color:#707070;font-weight:400;letter-spacing:0.947px;"><i class="b"></i>Traceability</span>
<span class="t" id="t65" style="left:1371.00px;top:300.71px;font-size:17.4px;color:#707070;font-weight:400;letter-spacing:1.503px;"><i class="b"></i>Activity</span>
<span class="t" id="t66" style="left:1907.50px;top:240.11px;font-size:16.2px;color:#fff;font-weight:500;letter-spacing:0.763px;-webkit-text-stroke:0.35px currentColor;"><i class="b"></i>System</span>
<span class="t" id="t67" style="left:486.40px;top:350.61px;font-size:16.2px;color:#333;font-weight:400;letter-spacing:0.038px;"><i class="b"></i>Version 1</span>
<span class="t" id="t68" style="left:593.90px;top:351.00px;font-size:16.2px;color:#fff;font-weight:400;letter-spacing:0.952px;"><i class="b"></i>Draft</span>
<span class="t" id="t69" style="left:709.80px;top:351.00px;font-size:16.2px;color:#e9bf6c;font-weight:400;letter-spacing:1.624px;"><i class="b"></i>Medium</span>
<span class="t" id="t70" style="left:1365.80px;top:351.71px;font-size:16.6px;color:#3a3a3a;font-weight:400;letter-spacing:1.906px;"><i class="b"></i>Owner</span>
<span class="t" id="t71" style="left:1465.20px;top:351.71px;font-size:16.6px;color:#3a3a3a;font-weight:400;letter-spacing:0.642px;"><i class="b"></i>Andy Pattison</span>
<span class="t" id="t72" style="left:1622.00px;top:353.30px;font-size:16.6px;color:#fff;font-weight:400;letter-spacing:0.758px;"><i class="b"></i>Add Contributors</span>
<span class="t" id="t73" style="left:1794.40px;top:353.30px;font-size:16.6px;color:#fff;font-weight:400;letter-spacing:0.349px;"><i class="b"></i>Add Reviewers</span>
<span class="t" id="t74" style="left:486.50px;top:405.71px;font-size:17.4px;color:#333;font-weight:400;letter-spacing:0.990px;"><i class="b"></i>Description</span>
<span class="t" id="t75" style="left:1879.70px;top:407.50px;font-size:17.4px;color:#222;font-weight:500;letter-spacing:0.480px;-webkit-text-stroke:0.35px currentColor;"><i class="b"></i>0 hrs.</span>
<span class="t" id="t76" style="left:500.80px;top:463.91px;font-size:16.7px;color:#6e67d9;font-weight:400;letter-spacing:0.478px;"><i class="b"></i>Edit</span>
<span class="t" id="t77" style="left:627.40px;top:463.91px;font-size:16.7px;color:#6e67d9;font-weight:400;letter-spacing:0.413px;"><i class="b"></i>History</span>
<span class="t" id="t78" style="left:1821.90px;top:464.00px;font-size:16.7px;color:#8b85e8;font-weight:400;letter-spacing:0.137px;"><i class="b"></i>Save as Template</span>
<span class="t" id="t79" style="left:490.70px;top:511.21px;font-size:17.2px;color:#3d3d3d;font-weight:400;letter-spacing:0.832px;"><i class="b"></i>Contrary to popular belief, Lorem Ipsum is not simply random text. It has roots in a piece of classical Latin literature from 45 BC, making it over 2000 years old. Contrary to</span>
<span class="t" id="t80" style="left:490.70px;top:535.41px;font-size:17.2px;color:#3d3d3d;font-weight:400;letter-spacing:0.836px;"><i class="b"></i>popular belief, Lorem Ipsum is not simply random text. It has roots in a piece of classical Latin literature from 45 BC, making it over 2000 years old.</span>
<span class="t" id="t81" style="left:490.70px;top:559.61px;font-size:17.2px;color:#3d3d3d;font-weight:400;letter-spacing:0.833px;"><i class="b"></i>Contrary to popular belief, Lorem Ipsum is not simply random text. It has roots in a piece of classical Latin literature from 45 BC, making it over 2000 years old. Richard</span>
<span class="t" id="t82" style="left:490.70px;top:583.80px;font-size:17.2px;color:#3d3d3d;font-weight:400;letter-spacing:0.897px;"><i class="b"></i>McClintock, a Latin professor at Hampden-Sydney College in Virginia, looked up one of the more obscure Latin words, consectetur, from a Lorem Ipsum passage, and</span>
<span class="t" id="t83" style="left:490.70px;top:608.00px;font-size:17.2px;color:#3d3d3d;font-weight:400;letter-spacing:0.804px;"><i class="b"></i>going through the cites of the word in classical literature, discovered the undoubtable source. Lorem Ipsum comes from sections 1.10.32 and 1.10.33 of "de Finibus Bonorum</span>
<span class="t" id="t84" style="left:490.70px;top:632.21px;font-size:17.2px;color:#3d3d3d;font-weight:400;letter-spacing:0.769px;"><i class="b"></i>et Malorum" (The Extremes of Good and Evil) by Cicero, written in 45 BC. This book is a treatise on the theory of ethics, very popular during the Renaissance. The first line of</span>
<span class="t" id="t85" style="left:490.70px;top:656.41px;font-size:17.2px;color:#3d3d3d;font-weight:400;letter-spacing:0.678px;"><i class="b"></i>Lorem Ipsum, "Lorem ipsum dolor sit amet..", comes from a line in section 1.10.32.</span>
<span class="t" id="t86" style="left:490.70px;top:680.61px;font-size:17.2px;color:#3d3d3d;font-weight:400;letter-spacing:0.758px;"><i class="b"></i>The standard chunk of Lorem Ipsum used since the 1500s is reproduced below for those interested. Sections 1.10.32 and 1.10.33 from "de Finibus Bonorum et Malorum" by</span>
<span class="t" id="t87" style="left:490.70px;top:704.80px;font-size:17.2px;color:#3d3d3d;font-weight:400;letter-spacing:0.816px;"><i class="b"></i>Cicero are also reproduced in their exact original form, accompanied by English versions from the 1914 translation by H. Rackham.</span>
<span class="t" id="t88" style="left:499.60px;top:770.50px;font-size:16.7px;color:#2a2a2a;font-weight:700;letter-spacing:1.350px;"><i class="b"></i>Lorem</span>
<span class="t" id="t89" style="left:742.80px;top:770.50px;font-size:16.7px;color:#2a2a2a;font-weight:700;letter-spacing:1.261px;"><i class="b"></i>Ipsum</span>
<span class="t" id="t90" style="left:986.60px;top:770.50px;font-size:16.7px;color:#2a2a2a;font-weight:700;letter-spacing:1.100px;"><i class="b"></i>Lorem</span>
<span class="t" id="t91" style="left:499.60px;top:809.80px;font-size:16.7px;color:#2a2a2a;font-weight:700;letter-spacing:1.012px;"><i class="b"></i>Lorem Ipsum</span>
<span class="t" id="t92" style="left:742.80px;top:809.80px;font-size:16.7px;color:#3a3a3a;font-weight:400;letter-spacing:1.631px;"><i class="b"></i>Lorem Ipsum</span>
<span class="t" id="t93" style="left:986.60px;top:809.80px;font-size:16.7px;color:#3a3a3a;font-weight:400;letter-spacing:1.631px;"><i class="b"></i>Lorem Ipsum</span>
<span class="t" id="t94" style="left:499.60px;top:850.21px;font-size:16.7px;color:#2a2a2a;font-weight:700;letter-spacing:1.012px;"><i class="b"></i>Lorem Ipsum</span>
<span class="t" id="t95" style="left:742.80px;top:850.21px;font-size:16.7px;color:#3a3a3a;font-weight:400;letter-spacing:1.631px;"><i class="b"></i>Lorem Ipsum</span>
<span class="t" id="t96" style="left:986.60px;top:850.21px;font-size:16.7px;color:#3a3a3a;font-weight:400;letter-spacing:1.631px;"><i class="b"></i>Lorem Ipsum</span>
<span class="t" id="t97" style="left:499.60px;top:890.50px;font-size:16.7px;color:#2a2a2a;font-weight:700;letter-spacing:1.012px;"><i class="b"></i>Lorem Ipsum</span>
<span class="t" id="t98" style="left:742.80px;top:939.00px;font-size:16.7px;color:#3a3a3a;font-weight:400;letter-spacing:1.631px;"><i class="b"></i>Lorem Ipsum</span>
<span class="t" id="t99" style="left:986.60px;top:890.50px;font-size:16.7px;color:#3a3a3a;font-weight:400;letter-spacing:1.631px;"><i class="b"></i>Lorem Ipsum</span>
<span class="t" id="t100" style="left:499.60px;top:979.50px;font-size:16.7px;color:#2a2a2a;font-weight:700;letter-spacing:1.012px;"><i class="b"></i>Lorem Ipsum</span>
<span class="t" id="t101" style="left:742.80px;top:1003.50px;font-size:16.7px;color:#3a3a3a;font-weight:400;letter-spacing:1.218px;"><i class="b"></i>Lorem Ipsum is simply a</span>
<span class="t" id="t102" style="left:742.80px;top:1028.00px;font-size:16.7px;color:#3a3a3a;font-weight:400;letter-spacing:1.771px;"><i class="b"></i>dummy text.</span>
<span class="t" id="t103" style="left:986.60px;top:979.50px;font-size:16.7px;color:#3a3a3a;font-weight:400;letter-spacing:1.631px;"><i class="b"></i>Lorem Ipsum</span>
<div style="left:73px;top:1038px;width:1975px;height:25.5px;background:linear-gradient(180deg,rgba(0,0,0,0),rgba(0,0,0,.045))"></div>
<div style="left:73px;top:1063.5px;width:1975px;height:11.5px;background:linear-gradient(180deg,#ebebeb,#dadada)"></div>
<div style="left:461px;top:1063px;width:1575px;height:1.3px;background:#cfcfcf"></div>
</div></body></html>
